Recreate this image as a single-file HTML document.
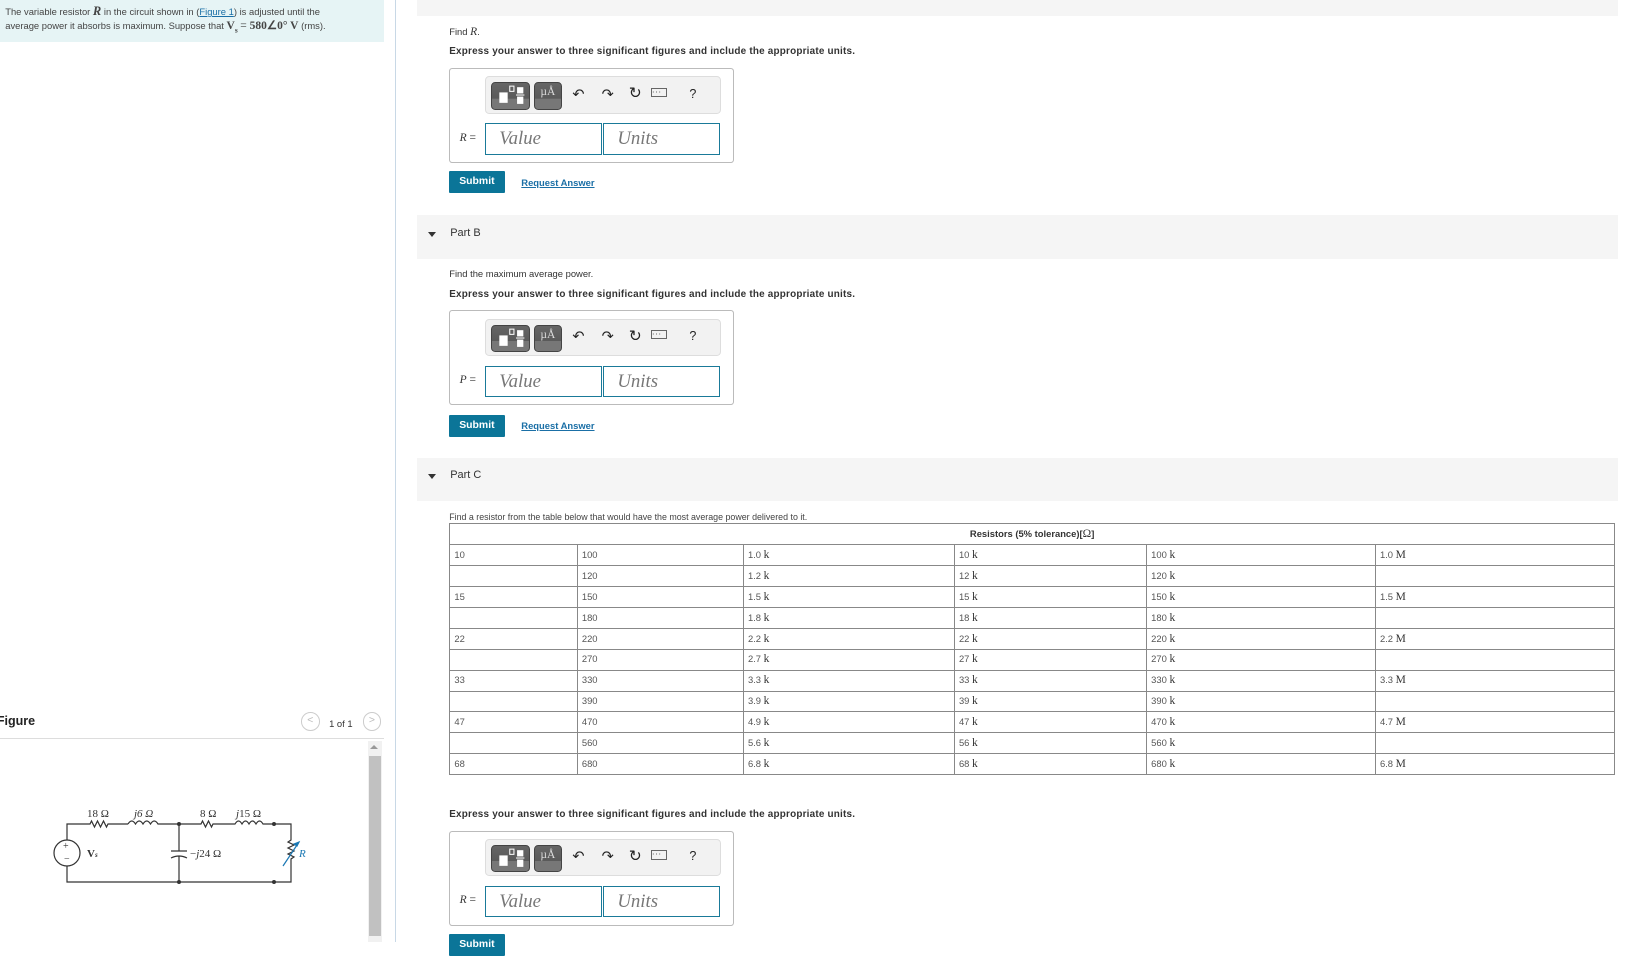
<!DOCTYPE html>
<html><head><meta charset="utf-8"><style>
*{box-sizing:border-box;margin:0;padding:0}
html,body{width:1635px;height:942px;overflow:hidden;background:#fff;font-family:"Liberation Sans",Arial,sans-serif;color:#333}
#w{position:absolute;left:0;top:0;width:1565px;height:902px;zoom:1.0447}
.a{position:absolute}
.m{font-family:"Liberation Serif",serif;font-style:italic}
.t9{font-size:9px}
.exp{font-size:9.5px;font-weight:bold;letter-spacing:.2px;color:#333}
.box{position:absolute;width:273px;height:91px;border:1px solid #bbb;border-radius:3px;background:#fff}
.tb{position:absolute;left:33px;top:7px;width:226px;height:36px;background:#f2f2f2;border:1px solid #ddd;border-radius:4px}
.b1,.b2{position:absolute;top:5px;height:26px;border-radius:4px;background:linear-gradient(#666 0,#5a5a5a 60%,#777 61%,#777 100%);border:1px solid #444}
.b1{left:5px;width:37px}.b2{left:46px;width:27px;color:#ddd;font-family:"Liberation Serif",serif;font-size:11px;text-align:center;line-height:18px}
.ic{position:absolute;top:8px;font-size:14px;color:#222}
.inp{position:absolute;top:52px;height:30px;border:1px solid #1a7a99;font-family:"Liberation Serif",serif;font-style:italic;font-size:18px;color:#777;padding-left:13px;line-height:28px}
.lab{position:absolute;left:9px;top:60px;font-size:11px;font-family:"Liberation Serif",serif}
.sub{position:absolute;width:53px;height:21px;background:#0b7598;color:#fff;font-weight:bold;font-size:10px;text-align:center;line-height:21px;border-radius:1px}
.req{position:absolute;font-size:9px;font-weight:bold;color:#1a6fa6;text-decoration:underline}
.hd{position:absolute;left:399px;width:1150px;height:42px;background:#f5f5f5}
.hd span{position:absolute;left:32px;top:11px;font-size:10.5px;color:#333}
.hd i{position:absolute;left:11px;top:16px;width:0;height:0;border-left:4px solid transparent;border-right:4px solid transparent;border-top:5px solid #333}
table{position:absolute;left:430px;top:501px;border-collapse:collapse;font-size:9px;color:#555}
td{border:1px solid #888;height:20px;padding:0 0 0 4px;vertical-align:middle;line-height:12px}
td b{font-family:"Liberation Serif",serif;font-weight:normal;font-size:11px;color:#333}
</style></head><body>
<div id="w">
<div class="a" style="left:0;top:0;width:368px;height:40px;background:#e6f4f5"></div>
<div class="a t9" style="left:5px;top:5px;line-height:13px;color:#444">The variable resistor <span class="m" style="font-size:12px;font-weight:bold">R</span> in the circuit shown in (<span style="color:#1a6fa6;text-decoration:underline">Figure 1</span>) is adjusted until the<br>average power it absorbs is maximum. Suppose that <b style="font-family:'Liberation Serif',serif;font-size:11px">V<sub style="font-size:7px">s</sub></b> <span style="font-family:'Liberation Serif',serif;font-size:11px">= <b>580∠0° V</b></span> (rms).</div>
<div class="a" style="left:378px;top:0;width:1px;height:902px;background:#c8d8e6"></div>

<div class="a" style="left:-3px;top:683px;font-size:12px;font-weight:bold;color:#222">Figure</div>
<div class="a" style="left:288px;top:682px;width:18px;height:18px;border:1px solid #ccc;border-radius:50%;color:#bbb;font-size:10px;text-align:center;line-height:16px">&lt;</div>
<div class="a" style="left:315px;top:687px;font-size:9px;color:#333">1 of 1</div>
<div class="a" style="left:347px;top:682px;width:18px;height:18px;border:1px solid #ccc;border-radius:50%;color:#bbb;font-size:10px;text-align:center;line-height:16px">&gt;</div>
<div class="a" style="left:0;top:706px;width:368px;height:1px;background:#ddd"></div>
<div class="a" style="left:352px;top:709px;width:14px;height:193px;background:#f1f1f1"></div>
<div class="a" style="left:354px;top:713px;width:0;height:0;border-left:4px solid transparent;border-right:4px solid transparent;border-bottom:4px solid #999"></div>
<div class="a" style="left:353px;top:724px;width:12px;height:172px;background:#c1c1c1"></div>

<div class="a" style="left:399px;top:0;width:1150px;height:15px;background:#f5f5f5"></div>
<div class="a t9" style="left:430px;top:25px">Find <span class="m" style="font-size:11px">R</span>.</div>
<div class="a exp" style="left:430px;top:44px">Express your answer to three significant figures and include the appropriate units.</div>

<div class="box" style="left:430px;top:65px">
<div class="tb"><div class="b1"><svg width="37" height="26" style="position:absolute;left:0;top:0"><rect x="7" y="9" width="8" height="10" fill="#fff"/><rect x="17" y="3" width="4" height="5" fill="none" stroke="#fff" stroke-width="1"/><rect x="24" y="4" width="6" height="6" fill="#fff"/><rect x="23" y="11" width="8" height="1" fill="#fff"/><rect x="24" y="13" width="6" height="7" fill="#fff"/></svg></div><div class="b2">µÅ</div>
<span class="ic" style="left:83px">↶</span><span class="ic" style="left:111px">↷</span><span class="ic" style="left:137px;font-size:15px;top:6px">↻</span><span class="ic" style="left:158px;top:10px;font-size:9px;border:1px solid #666;width:16px;height:9px;line-height:6px;letter-spacing:-1px;color:#666">⋯</span><span class="ic" style="left:195px;font-size:12px;top:9px">?</span></div>
<span class="lab"><i>R</i> =</span>
<div class="inp" style="left:33px;width:112px">Value</div><div class="inp" style="left:146px;width:112px">Units</div>
</div>
<div class="sub" style="left:430px;top:164px">Submit</div><div class="req" style="left:499px;top:169px">Request Answer</div>

<div class="hd" style="top:206px"><i></i><span>Part B</span></div>
<div class="a t9" style="left:430px;top:257px">Find the maximum average power.</div>
<div class="a exp" style="left:430px;top:277px">Express your answer to three significant figures and include the appropriate units.</div>
<div class="box" style="left:430px;top:297px">
<div class="tb"><div class="b1"><svg width="37" height="26" style="position:absolute;left:0;top:0"><rect x="7" y="9" width="8" height="10" fill="#fff"/><rect x="17" y="3" width="4" height="5" fill="none" stroke="#fff" stroke-width="1"/><rect x="24" y="4" width="6" height="6" fill="#fff"/><rect x="23" y="11" width="8" height="1" fill="#fff"/><rect x="24" y="13" width="6" height="7" fill="#fff"/></svg></div><div class="b2">µÅ</div>
<span class="ic" style="left:83px">↶</span><span class="ic" style="left:111px">↷</span><span class="ic" style="left:137px;font-size:15px;top:6px">↻</span><span class="ic" style="left:158px;top:10px;font-size:9px;border:1px solid #666;width:16px;height:9px;line-height:6px;letter-spacing:-1px;color:#666">⋯</span><span class="ic" style="left:195px;font-size:12px;top:9px">?</span></div>
<span class="lab"><i>P</i> =</span>
<div class="inp" style="left:33px;width:112px">Value</div><div class="inp" style="left:146px;width:112px">Units</div>
</div>
<div class="sub" style="left:430px;top:397px">Submit</div><div class="req" style="left:499px;top:402px">Request Answer</div>

<div class="hd" style="top:438px"><i></i><span>Part C</span></div>
<div class="a" style="left:430px;top:490px;font-size:8.5px;color:#444">Find a resistor from the table below that would have the most average power delivered to it.</div>
<table>
<tr><td colspan="6" style="text-align:center;font-weight:bold;color:#333;padding:0">Resistors (5% tolerance)[<b>Ω</b>]</td></tr>
<tr><td style="width:122px">10</td><td style="width:159px">100</td><td style="width:202px">1.0 <b>k</b></td><td style="width:184px">10 <b>k</b></td><td style="width:219px">100 <b>k</b></td><td style="width:229px">1.0 <b>M</b></td></tr>
<tr><td></td><td>120</td><td>1.2 <b>k</b></td><td>12 <b>k</b></td><td>120 <b>k</b></td><td></td></tr>
<tr><td>15</td><td>150</td><td>1.5 <b>k</b></td><td>15 <b>k</b></td><td>150 <b>k</b></td><td>1.5 <b>M</b></td></tr>
<tr><td></td><td>180</td><td>1.8 <b>k</b></td><td>18 <b>k</b></td><td>180 <b>k</b></td><td></td></tr>
<tr><td>22</td><td>220</td><td>2.2 <b>k</b></td><td>22 <b>k</b></td><td>220 <b>k</b></td><td>2.2 <b>M</b></td></tr>
<tr><td></td><td>270</td><td>2.7 <b>k</b></td><td>27 <b>k</b></td><td>270 <b>k</b></td><td></td></tr>
<tr><td>33</td><td>330</td><td>3.3 <b>k</b></td><td>33 <b>k</b></td><td>330 <b>k</b></td><td>3.3 <b>M</b></td></tr>
<tr><td></td><td>390</td><td>3.9 <b>k</b></td><td>39 <b>k</b></td><td>390 <b>k</b></td><td></td></tr>
<tr><td>47</td><td>470</td><td>4.9 <b>k</b></td><td>47 <b>k</b></td><td>470 <b>k</b></td><td>4.7 <b>M</b></td></tr>
<tr><td></td><td>560</td><td>5.6 <b>k</b></td><td>56 <b>k</b></td><td>560 <b>k</b></td><td></td></tr>
<tr><td>68</td><td>680</td><td>6.8 <b>k</b></td><td>68 <b>k</b></td><td>680 <b>k</b></td><td>6.8 <b>M</b></td></tr>
</table>
<div class="a exp" style="left:430px;top:774px">Express your answer to three significant figures and include the appropriate units.</div>
<div class="box" style="left:430px;top:795px">
<div class="tb"><div class="b1"><svg width="37" height="26" style="position:absolute;left:0;top:0"><rect x="7" y="9" width="8" height="10" fill="#fff"/><rect x="17" y="3" width="4" height="5" fill="none" stroke="#fff" stroke-width="1"/><rect x="24" y="4" width="6" height="6" fill="#fff"/><rect x="23" y="11" width="8" height="1" fill="#fff"/><rect x="24" y="13" width="6" height="7" fill="#fff"/></svg></div><div class="b2">µÅ</div>
<span class="ic" style="left:83px">↶</span><span class="ic" style="left:111px">↷</span><span class="ic" style="left:137px;font-size:15px;top:6px">↻</span><span class="ic" style="left:158px;top:10px;font-size:9px;border:1px solid #666;width:16px;height:9px;line-height:6px;letter-spacing:-1px;color:#666">⋯</span><span class="ic" style="left:195px;font-size:12px;top:9px">?</span></div>
<span class="lab"><i>R</i> =</span>
<div class="inp" style="left:33px;width:112px">Value</div><div class="inp" style="left:146px;width:112px">Units</div>
</div>
<div class="sub" style="left:430px;top:894px">Submit</div>
</div>

<svg class="a" style="left:0;top:780px" width="330" height="120" viewBox="0 780 330 120" font-family="Liberation Serif,serif" font-size="11" fill="none" stroke="#333" stroke-width="1.2">
<path d="M67 840 V824 H90 l1.5 -3 l3 6 l3 -6 l3 6 l3 -6 l3 6 l1.5 -3 H128"/>
<path d="M128 824 q3.75 -6 7.5 0 q3.75 -6 7.5 0 q3.75 -6 7.5 0 q3.75 -6 7.5 0 H201 l1.5 -3 l3 6 l3 -6 l3 6 l1.5 -3 H235 q3.5 -6 7 0 q3.5 -6 7 0 q3.5 -6 7 0 q3.5 -6 7 0 H291 V840 l-3 2 l6 3 l-6 3 l6 3 l-6 3 l6 3 l-3 2 V882 H67 V866"/>
<circle cx="67" cy="853" r="13"/>
<path d="M179 824 V851 M171 851 H187 M171 858 q8 -4 16 0 M179 856 V882"/>
<path d="M283 866 L299 842" stroke="#1a78b4"/>
<path d="M299 842 l-5 2 l3 2 z" fill="#1a78b4" stroke="#1a78b4"/>
<g fill="#333" stroke="none">
<circle cx="179" cy="824" r="2"/><circle cx="274" cy="824" r="2"/><circle cx="179" cy="882" r="2"/><circle cx="274" cy="882" r="2"/>
<text x="63" y="849" font-size="10">+</text><text x="64" y="862" font-size="10">−</text>
<text x="87" y="817">18 Ω</text><text x="134" y="817" font-style="italic">j6 Ω</text>
<text x="200" y="817">8 Ω</text><text x="236" y="817"><tspan font-style="italic">j</tspan>15 Ω</text>
<text x="87" y="857" font-weight="bold">V<tspan font-size="7" font-style="italic">s</tspan></text>
<text x="190" y="857">−<tspan font-style="italic">j</tspan>24 Ω</text>
<text x="299" y="857" font-style="italic" fill="#1a78b4">R</text>
</g>
</svg>
</body></html>
